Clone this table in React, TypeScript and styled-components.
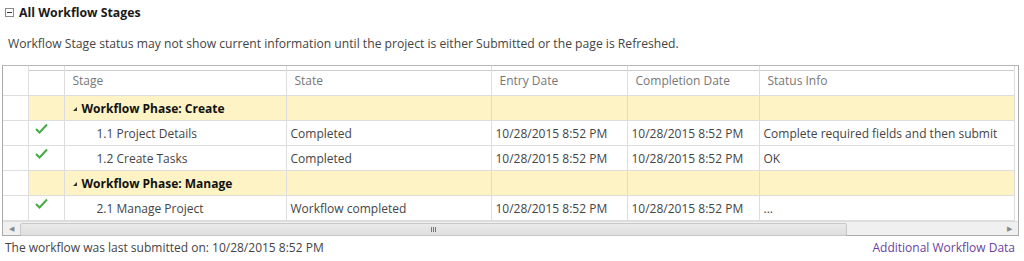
import * as React from "react";
import styled, { createGlobalStyle } from "styled-components";

const GlobalStyle = createGlobalStyle`
  body {
    margin: 0;
    background: #fff;
    font-family: "Open Sans", "Segoe UI", sans-serif;
    color: #444;
  }
`;

const Page = styled.div`
  width: 1024px;
  height: 261px;
  overflow: hidden;
  display: flex;
  flex-direction: column;
`;

const TitleRow = styled.div`
  display: flex;
  align-items: center;
  gap: 5px;
  padding: 3px 0 0 5px;
  height: 18px;
`;

const Title = styled.h2`
  margin: 0;
  font-size: 12.3px;
  font-weight: 700;
  color: #1a1a1a;
`;

const Note = styled.p`
  margin: 14px 0 0 8px;
  font-size: 12.15px;
  line-height: 17px;
  color: #444;
`;

const Frame = styled.div`
  margin: 13px 0 0 2px;
  width: 1015px;
  border: 1px solid #aaa;
  border-top-color: #b8b8b8;
`;

const Table = styled.table`
  border-collapse: collapse;
  table-layout: fixed;
  width: 1011px;
  font-size: 12px;
`;

const Th = styled.th<{ $topLine?: boolean }>`
  height: 29px;
  padding: 0 0 0 8px;
  text-align: left;
  vertical-align: middle;
  font-weight: 400;
  color: #777;
  border-right: 1px solid #ddd;
  border-bottom: 1px solid #ddd;
  box-shadow: ${(p) => (p.$topLine ? "inset 0 4px 0 #fff, inset 0 5px 0 #ccc" : "none")};
`;

const Td = styled.td<{ $group?: boolean; $indent?: number }>`
  height: 24px;
  padding: 0 0 0 ${(p) => 4 + (p.$indent ?? 0)}px;
  white-space: nowrap;
  overflow: hidden;
  background: ${(p) => (p.$group ? "#fdf3c4" : "#fff")};
  border-right: 1px solid #ddd;
  border-bottom: 1px solid #ddd;
  color: ${(p) => (p.$group ? "#111" : "#444")};
  font-weight: ${(p) => (p.$group ? 700 : 400)};
`;

const GroupLabel = styled.span`
  padding-left: 4px;
`;

const IconCell = styled.td`
  height: 22px;
  padding: 2px 0 0 6px;
  vertical-align: top;
  background: #fff;
  border-right: 1px solid #ddd;
  border-bottom: 1px solid #ddd;
`;

const Gutter = styled.td`
  height: 24px;
  padding: 0;
  background: #fff;
  border-right: 1px solid #ddd;
  border-bottom: 1px solid #ddd;
`;

const Caret = styled.span`
  display: inline-block;
  width: 0;
  height: 0;
  margin: 0 5px 2px 0;
  border-left: 4px solid transparent;
  border-bottom: 4px solid #333;
`;

const Scrollbar = styled.div`
  display: flex;
  height: 13px;
  background: #f0f0f0;
  border-top: 1px solid #ddd;
`;

const Arrow = styled.div`
  width: 17px;
  display: flex;
  align-items: center;
  justify-content: center;
  color: #888;
  font-size: 7px;
`;

const Thumb = styled.div`
  width: 825px;
  height: 11px;
  margin-top: 1px;
  background: linear-gradient(#eaeaea, #dedede);
  border: 1px solid #c8c8c8;
  border-radius: 2px;
  display: flex;
  align-items: center;
  justify-content: center;
  gap: 1px;
`;

const Grip = styled.span`
  width: 1px;
  height: 5px;
  background: #777;
`;

const Track = styled.div`
  flex: 1;
`;

const Footer = styled.div`
  display: flex;
  justify-content: space-between;
  padding: 3px 9px 0 5px;
  font-size: 12px;
  line-height: 17px;
`;

const Link = styled.a`
  color: #6b3fa0;
  text-decoration: none;
`;

const MinusBox = () => (
  <svg width="9" height="9" viewBox="0 0 9 9">
    <rect x="0.5" y="0.5" width="8" height="8" fill="#fff" stroke="#8a8a8a" />
    <path d="M2 4.5h5" stroke="#333" />
  </svg>
);

const Check = () => (
  <svg width="13" height="11" viewBox="0 0 13 11" style={{ display: "block" }}>
    <path d="M1 6l3.5 3.5L12 1.5" fill="none" stroke="#45ad45" strokeWidth="2" />
  </svg>
);

type Row =
  | { kind: "group"; label: string }
  | { kind: "task"; stage: string; state: string; entry: string; done: string; info: string };

const rows: Row[] = [
  { kind: "group", label: "Workflow Phase: Create" },
  { kind: "task", stage: "1.1 Project Details", state: "Completed", entry: "10/28/2015 8:52 PM", done: "10/28/2015 8:52 PM", info: "Complete required fields and then submit" },
  { kind: "task", stage: "1.2 Create Tasks", state: "Completed", entry: "10/28/2015 8:52 PM", done: "10/28/2015 8:52 PM", info: "OK" },
  { kind: "group", label: "Workflow Phase: Manage" },
  { kind: "task", stage: "2.1 Manage Project", state: "Workflow completed", entry: "10/28/2015 8:52 PM", done: "10/28/2015 8:52 PM", info: "..." },
];

const App = () => (
  <Page>
    <GlobalStyle />
    <TitleRow>
      <MinusBox />
      <Title>All Workflow Stages</Title>
    </TitleRow>
    <Note>
      Workflow Stage status may not show current information until the project is either Submitted or the page is Refreshed.
    </Note>
    <Frame>
      <Table>
        <colgroup>
          <col style={{ width: 25 }} />
          <col style={{ width: 36 }} />
          <col style={{ width: 222 }} />
          <col style={{ width: 205 }} />
          <col style={{ width: 136 }} />
          <col style={{ width: 132 }} />
          <col style={{ width: 255 }} />
        </colgroup>
        <thead>
          <tr>
            <Th />
            <Th $topLine />
            <Th $topLine>Stage</Th>
            <Th $topLine>State</Th>
            <Th $topLine>Entry Date</Th>
            <Th $topLine>Completion Date</Th>
            <Th $topLine>Status Info</Th>
          </tr>
        </thead>
        <tbody>
          {rows.map((r, i) =>
            r.kind === "group" ? (
              <tr key={i}>
                <Gutter />
                <Td $group />
                <Td $group>
                  <GroupLabel>
                    <Caret />
                    {r.label}
                  </GroupLabel>
                </Td>
                <Td $group />
                <Td $group />
                <Td $group />
                <Td $group />
              </tr>
            ) : (
              <tr key={i}>
                <Gutter />
                <IconCell>
                  <Check />
                </IconCell>
                <Td $indent={28}>{r.stage}</Td>
                <Td>{r.state}</Td>
                <Td>{r.entry}</Td>
                <Td>{r.done}</Td>
                <Td>{r.info}</Td>
              </tr>
            )
          )}
        </tbody>
      </Table>
      <Scrollbar>
        <Arrow>◀</Arrow>
        <Thumb>
          <Grip />
          <Grip />
          <Grip />
        </Thumb>
        <Track />
        <Arrow>▶</Arrow>
      </Scrollbar>
    </Frame>
    <Footer>
      <span>The workflow was last submitted on: 10/28/2015 8:52 PM</span>
      <Link href="#">Additional Workflow Data</Link>
    </Footer>
  </Page>
);

export default App;
